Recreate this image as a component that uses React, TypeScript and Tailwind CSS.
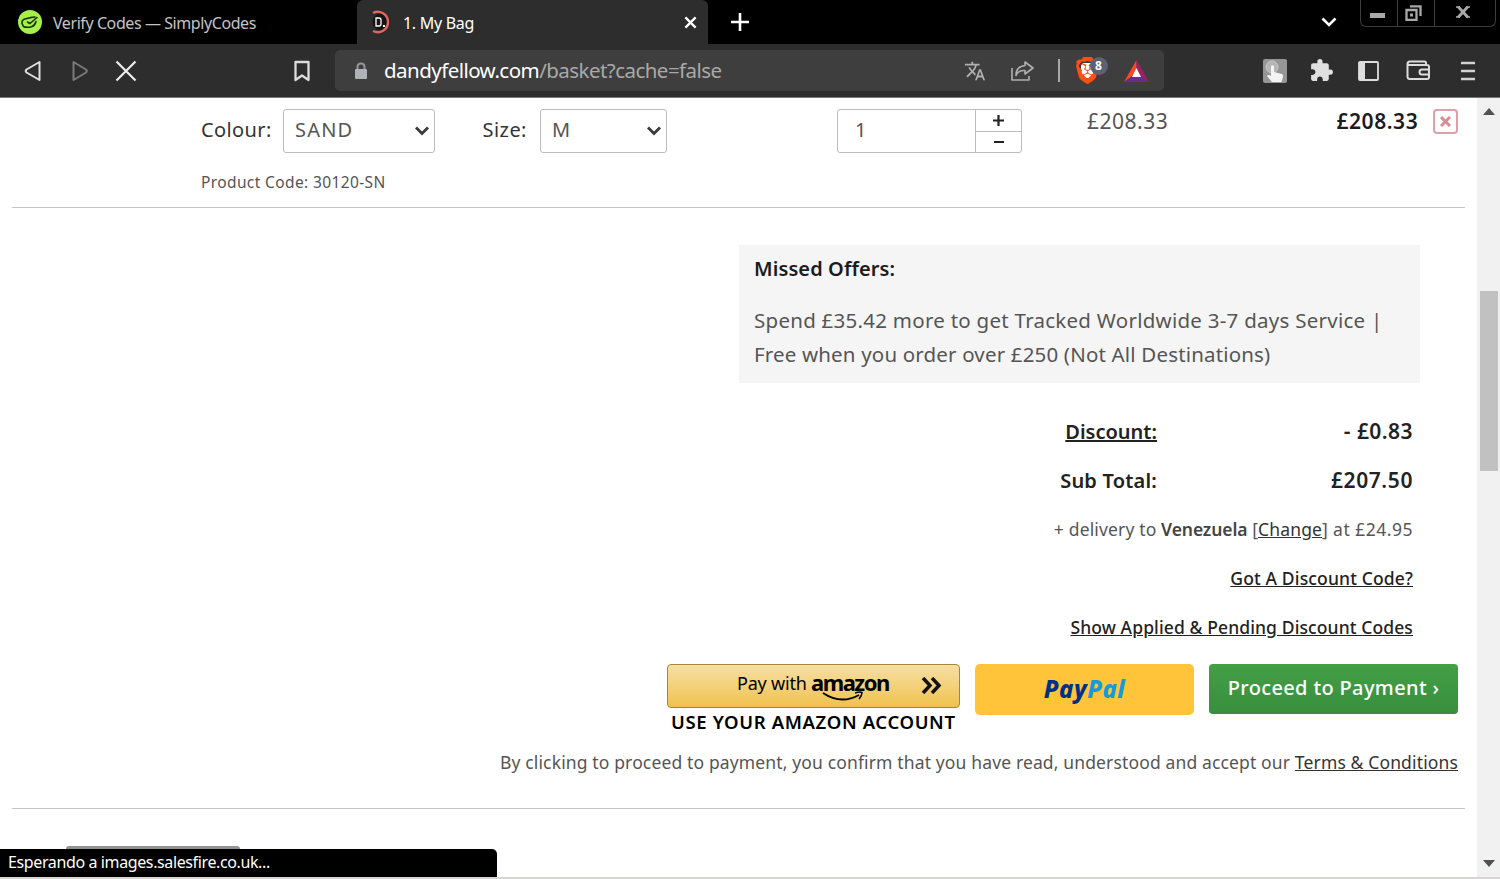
import type { ReactNode } from 'react';
import { MdExtension, MdTranslate } from 'react-icons/md';
import { SiBrave } from 'react-icons/si';

function TabBar() {
    return (
        <div className="flex h-11 items-start bg-black text-[16px] leading-[44px]">
            <div className="flex h-11 w-[357px] items-center pl-[18px] text-[#c4c4c4]">
                <svg width="24" height="24" viewBox="0 0 24 24" className="mr-[11px]">
                    <circle cx="12" cy="12" r="12" fill="#a6f04c" />
                    <g fill="none" stroke="#16310a" strokeWidth="1.6" strokeLinecap="round" strokeLinejoin="round">
                        <path d="M13 7.500 7 9Q3.500 10 4 13.500l1.500 3q3 1.500 8 .2 3.500-1.200 4.500-5.200" />
                        <path d="m9.500 12 2.500 1.500L19 7.500" />
                        <path d="M13 7.500 17 7" />
                    </g>
                </svg>
                <span className="mt-px tracking-[-0.42px]">Verify Codes — SimplyCodes</span>
            </div>
            <div className="flex h-11 w-[351px] items-center rounded-t-md bg-[#2d2d2d] pl-[14px] pr-[11px] text-white">
                <svg width="24" height="24" viewBox="0 0 24 24" className="mr-2">
                    <circle cx="10" cy="12" r="8.500" fill="#141414" />
                    <path d="M2.500 3a10.200 10.200 0 1 1 0 18" fill="none" stroke="#e0665e" strokeWidth="2.500" transform="translate(-.5 0)" />
                    <path d="M5 8h3q2 0 2 2v4q0 2-2 2H5z" fill="none" stroke="#fff" strokeWidth="1.300" />
                    <rect x="12" y="15" width="2" height="2" fill="#fff" />
                </svg>
                <span className="mt-px tracking-[-0.3px]">1. My Bag</span>
                <svg width="13" height="13" viewBox="0 0 14 14" className="ml-auto" stroke="#fff" strokeWidth="2.500">
                    <path d="m1.500 1.500 11 11m0-11-11 11" />
                </svg>
            </div>
            <svg width="18" height="18" viewBox="0 0 18 18" className="ml-[23px] mt-[13px]" stroke="#fff" strokeWidth="2.600">
                <path d="M9 0v18M0 9h18" />
            </svg>
            <svg width="16" height="10" viewBox="0 0 16 10" className="ml-auto mt-[17px]" fill="none" stroke="#fff" strokeWidth="2.500">
                <path d="m1.500 1.500 6.500 6.500 6.500-6.500" />
            </svg>
            <div className="ml-[23px] mr-[4px] flex h-[27px] w-[136px] rounded-b-md border border-t-0 border-[#3c3c3c] text-[#a8a8a8]">
                <div className="flex w-[37px] border-r border-[#3c3c3c] pt-[13px] pl-[9px]">
                    <div className="h-[5px] w-[15px] bg-[#a8a8a8]" />
                </div>
                <div className="flex w-[37px] border-r border-[#3c3c3c] pt-[5px] pl-[7px]">
                    <svg width="17" height="16" viewBox="0 0 17 16" fill="none" stroke="#a8a8a8" strokeWidth="2.300">
                        <path d="M1.500 5h10v10h-10zM5 1.300h10.500V11" />
                        <path d="M5 8.500h3v3H5z" fill="#a8a8a8" stroke="none" />
                    </svg>
                </div>
                <div className="flex flex-1 pt-[6px] pl-[21px]">
                    <svg width="14" height="12" viewBox="0 0 14 12" fill="none" stroke="#a8a8a8" strokeWidth="2.900">
                        <path d="m2 .5 10 11m0-11-10 11" />
                        <path d="M0 1h4M10 1h4M0 11h4M10 11h4" strokeWidth="1.500" />
                    </svg>
                </div>
            </div>
        </div>
    );
}

function Toolbar() {
    return (
        <div className="flex h-[54px] items-center border-b border-[#777] bg-[#2d2d2d]">
            <svg width="18" height="22" viewBox="0 0 18 22" className="ml-[24px]" fill="none" stroke="#e0e0e0" strokeWidth="2" strokeLinejoin="round">
                <path d="M15.500 2v18L2.500 12.500q-1.500-1.500 0-3z" />
            </svg>
            <svg width="18" height="22" viewBox="0 0 18 22" className="ml-[30px]" fill="none" stroke="#7a7a7a" strokeWidth="2" strokeLinejoin="round">
                <path d="M1.500 2v18L14 12.500q1.500-1.500 0-3z" />
            </svg>
            <svg width="22" height="22" viewBox="0 0 22 22" className="ml-[25px]" fill="none" stroke="#ececec" strokeWidth="2.200">
                <path d="m1.500 1.500 19 19m0-19-19 19" />
            </svg>
            <svg width="16" height="22" viewBox="0 0 16 22" className="ml-[157px]" fill="none" stroke="#dcdcdc" strokeWidth="2.300" strokeLinejoin="round">
                <path d="M1.500 2h13v18L8 15.500 1.500 20z" />
            </svg>
            <div className="ml-[25px] flex h-[41px] w-[829px] items-center rounded-[5px] bg-[#3e3e3e] pl-[19px]">
                <svg width="14" height="18" viewBox="0 0 14 18" fill="none">
                    <path d="M3.500 8V5q0-3.500 3.500-3.500T10.500 5v3" stroke="#96969c" strokeWidth="2" />
                    <rect x="1" y="7" width="12" height="10" rx="1" fill="#b1b1b8" />
                </svg>
                <div className="ml-[16px] w-[360px] text-[20.500px] leading-[41px] tracking-[-0.54px] text-[#a9a9a9]">
                    <span className="text-white">dandyfellow.com</span>/basket?cache=false
                </div>
                <MdTranslate className="ml-[220px] h-[22px] w-[22px] text-[#b0b0b0]" />
                <svg width="24" height="22" viewBox="0 0 24 22" className="ml-[25px]" fill="none" stroke="#b0b0b0" strokeWidth="1.600" strokeLinejoin="round">
                    <path d="M1 8v12h17v-4" />
                    <path d="m14 2 8 6-8 6v-3.500q-7-.5-9 5 0-9 9-10z" />
                </svg>
                <div className="ml-[23px] h-[23px] w-[1.500px] bg-[#a8a8a8]" />
                <div className="relative ml-[15px] h-[28px] w-[34px]">
                    <div className="flex h-[28px] w-[26px] items-center justify-center">
                        <div className="flex h-[15px] w-[14px] items-center justify-center rounded-[4px] bg-white">
                            <SiBrave className="h-[27px] w-[27px] shrink-0 text-[#fb5012]" />
                        </div>
                    </div>
                    <div className="absolute top-[0px] left-[15px] flex h-[18px] w-[18px] items-center justify-center rounded-full bg-[#5d6174] text-[12px] leading-none font-bold text-white">
                        8
                    </div>
                </div>
                <svg width="25" height="22" viewBox="0 0 25 22" className="ml-[15px]">
                    <path d="M12.500 0 0 22 12.500 13z" fill="#ff4724" />
                    <path d="M12.500 0 25 22 12.500 13z" fill="#9e1f63" />
                    <path d="M0 22h25l-12.500-9z" fill="#662d91" />
                    <path d="M12.500 8 17 17H8z" fill="#fff" />
                </svg>
            </div>
            <svg width="24" height="24" viewBox="0 0 24 24" className="ml-[99px]">
                <rect width="24" height="24" rx="2" fill="#969696" />
                <circle cx="9" cy="8" r="6" fill="#b5b5b5" stroke="#c9c9c9" />
                <path d="M8 7q1.500-1.500 3 0v6l8 2q1.500 1 1 3l-1.500 5H9l-5-6q1-2 4 0z" fill="#f4f4f4" />
            </svg>
            <MdExtension className="ml-[22px] h-[25px] w-[25px] text-[#e0e0e0]" />
            <svg width="22" height="20" viewBox="0 0 22 20" className="ml-[24px]">
                <rect x="1" y="1" width="19" height="18" rx="1" fill="none" stroke="#dedede" strokeWidth="1.800" />
                <path d="M1 1h6v18H1z" fill="#dedede" />
            </svg>
            <svg width="25" height="21" viewBox="0 0 25 21" className="ml-[26px]" fill="none" stroke="#dcdcdc" strokeWidth="2">
                <path d="M20 4.500V3q0-1.500-1.500-1.500H4Q1.500 1.500 1.500 4v12.500q0 2.500 2.500 2.500h17q2 0 2-2V7q0-2-2-2H4Q1.500 5 1.500 3.500" />
                <path d="M23 9.500h-7q-2.500 0-2.500 2.500t2.500 2.500h7" />
            </svg>
            <svg width="16" height="20" viewBox="0 0 16 20" className="ml-[29px]" stroke="#d2d2d2" strokeWidth="2.400">
                <path d="M1 2h14M1 10h14M1 18h14" />
            </svg>
        </div>
    );
}

function Select({ value, className }: { value: string; className: string }) {
    return (
        <div className={`flex h-11 items-center justify-between rounded-[3px] border-[1.500px] border-[#bdbdbd] pr-[5px] pl-[11px] text-[#555] ${className}`}>
            <span className="-mt-[2px] tracking-[1.2px]">{value}</span>
            <svg width="14" height="10" viewBox="0 0 14 10" fill="none" stroke="#3a3a3a" strokeWidth="2.800">
                <path d="m1 1.500 6 6 6-6" />
            </svg>
        </div>
    );
}

function TotalRow({ children }: { children: ReactNode }) {
    return <div className="flex h-[49px] items-center justify-end whitespace-nowrap">{children}</div>;
}

function BasketItem() {
    return (
        <div className="ml-[12px] h-[110px] w-[1453px] border-b-[1.500px] border-[#c4c4c4] pt-[11px] text-[20px]">
            <div className="flex items-start pl-[189px] text-[#333]">
                <span className="w-[82px] leading-[41px] tracking-[0.4px]">Colour:</span>
                <Select value="SAND" className="w-[152px]" />
                <span className="ml-[47.5px] w-[57.5px] leading-[41px] tracking-[0.45px]">Size:</span>
                <Select value="M" className="w-[127px]" />
                <div className="ml-[170px] flex h-11 w-[185px] rounded-[3px] border-[1.500px] border-[#bdbdbd]">
                    <span className="w-[138px] border-r border-[#bdbdbd] pl-[17px] leading-[39px] text-[#555]">1</span>
                    <div className="flex flex-1 flex-col">
                        <div className="flex flex-1 items-center justify-center border-b border-[#bdbdbd]">
                            <svg width="11" height="11" viewBox="0 0 11 11" stroke="#222" strokeWidth="2.200">
                                <path d="M5.500 0v11M0 5.500h11" />
                            </svg>
                        </div>
                        <div className="flex flex-1 items-center justify-center">
                            <div className="h-[2.500px] w-[10px] bg-[#222]" />
                        </div>
                    </div>
                </div>
                <span className="ml-[65px] w-[249.5px] text-[21px] leading-[24px] tracking-[0.5px] text-[#555]">£208.33</span>
                <span className="text-[21px] leading-[24px] font-semibold tracking-[0.55px] text-[#1c1c1c]">£208.33</span>
                <div className="ml-auto mr-[7px] flex h-[25px] w-[25px] items-center justify-center rounded-[4px] border-[2.500px] border-[#e0a0a8]">
                    <svg width="11" height="11" viewBox="0 0 11 11" stroke="#d88c96" strokeWidth="3">
                        <path d="m1 1 9 9m0-9-9 9" />
                    </svg>
                </div>
            </div>
            <div className="mt-[18px] pl-[189px] text-[15.500px] leading-[22px] tracking-[0.38px] text-[#555]">Product Code: 30120-SN</div>
        </div>
    );
}

function PaymentButtons() {
    return (
        <div className="mt-[12px] flex items-start justify-end gap-[15px] pr-[19px]">
            <div className="w-[293px]">
                <div className="flex h-11 items-center rounded-[4px] border-[1.500px] border-[#a98530] bg-gradient-to-b from-[#f7dfa2] to-[#f0c14a] pl-[69px] text-black">
                    <span className="-mt-[5px] w-[74px] text-[18px] tracking-[-0.2px]">Pay with</span>
                    <div className="relative -mt-[9px] w-[80px] text-[22px] leading-[30px] font-bold tracking-[-1.5px]">
                        amazon
                        <svg width="44" height="11" viewBox="0 0 44 11" className="absolute top-[24px] left-[11px]" fill="none" stroke="#000" strokeWidth="2">
                            <path d="M1 2q18 12 36 2" />
                            <path d="M33 2q5-1.500 7-.5 0 3-3 6.500" strokeWidth="1.500" />
                        </svg>
                    </div>
                    <svg width="21" height="17" viewBox="0 0 21 17" className="-mt-[2px] ml-[30px]" fill="none" stroke="#111" strokeWidth="3.500">
                        <path d="m2 1 7 7.500L2 16M11 1l7 7.500L11 16" />
                    </svg>
                </div>
                <div className="pl-[4px] text-[18.500px] leading-[28px] font-semibold tracking-[0.63px] whitespace-nowrap text-black">USE YOUR AMAZON ACCOUNT</div>
            </div>
            <div className="flex h-[51px] w-[219px] items-center justify-center rounded-[5px] bg-[#ffc439] pb-[2px] text-[24px] font-extrabold tracking-[0.5px] text-[#003087] italic">
                Pay<span className="text-[#169bd7]">Pal</span>
            </div>
            <div className="flex h-[50px] w-[249px] items-center justify-center rounded-[4px] bg-gradient-to-b from-[#43a047] to-[#388e3c] pb-[2px] text-[20px] font-medium tracking-[0.36px] whitespace-nowrap text-white">
                Proceed to Payment ›
            </div>
        </div>
    );
}

function Basket() {
    return (
        <div className="flex h-[779px] w-[1477px] flex-col overflow-hidden bg-white">
            <BasketItem />
            <div className="mt-[37px] mr-[57px] h-[138px] w-[681px] self-end bg-[#f5f5f5] pt-[8px] pl-[15px] text-[20px] whitespace-nowrap">
                <div className="leading-[31px] font-semibold tracking-[0.1px] text-[#1c1c1c]">Missed Offers:</div>
                <div className="mt-[19px] text-[20.500px] leading-[34px] text-[#555]">
                    <div className="tracking-[0.26px]">Spend £35.42 more to get Tracked Worldwide 3-7 days Service |</div>
                    <div className="tracking-[0.17px]">Free when you order over £250 (Not All Destinations)</div>
                </div>
            </div>
            <div className="mt-[24px] pr-[64px] text-[17.500px] text-[#222]">
                <TotalRow>
                    <span className="text-[20px] font-semibold underline">Discount:</span>
                    <span className="w-[256px] text-right text-[21px] font-semibold tracking-[0.45px]">- £0.83</span>
                </TotalRow>
                <TotalRow>
                    <span className="text-[20px] font-semibold tracking-[0.2px]">Sub Total:</span>
                    <span className="w-[256px] text-right text-[21px] font-semibold tracking-[0.6px]">£207.50</span>
                </TotalRow>
                <TotalRow>
                    <span className="tracking-[0.15px] text-[#555]">
                        + delivery to <b className="font-semibold tracking-[-0.1px] text-[#444]">Venezuela</b> [<span className="text-[#333] underline">Change</span>]
                        <span className="tracking-[0.5px]"> at £24.95</span>
                    </span>
                </TotalRow>
                <TotalRow>
                    <span className="font-medium tracking-[0.15px] underline">Got A Discount Code?</span>
                </TotalRow>
                <TotalRow>
                    <span className="font-medium tracking-[0.11px] underline">Show Applied &amp; Pending Discount Codes</span>
                </TotalRow>
            </div>
            <PaymentButtons />
            <div className="mt-[12px] h-[61px] w-[1453px] self-center border-b-[1.500px] border-[#c4c4c4] pr-[7px] text-right text-[17.500px] leading-[28px] tracking-[0.14px] text-[#555]">
                By clicking to proceed to payment, you confirm that you have read, understood and accept our <span className="text-[#333] underline">Terms &amp; Conditions</span>
            </div>
            <div className="mt-auto ml-[66px] h-[3px] w-[174px] rounded-t-[3px] bg-[#929292]" />
            <div className="h-[28px] w-[497px] rounded-tr-[5px] bg-black pl-[8px] text-[16px] leading-[26px] tracking-[-0.38px] text-white">Esperando a images.salesfire.co.uk...</div>
        </div>
    );
}

function Scrollbar() {
    return (
        <div className="flex w-[23px] flex-col items-center bg-[#f1f1f1] pt-[10px] pb-[10px]">
            <svg width="12" height="7" viewBox="0 0 12 7">
                <path d="M6 0 12 7H0z" fill="#505050" />
            </svg>
            <div className="mt-[176px] h-[180px] w-[18px] bg-[#c1c1c1]" />
            <svg width="12" height="7" viewBox="0 0 12 7" className="mt-auto">
                <path d="M6 7 12 0H0z" fill="#505050" />
            </svg>
        </div>
    );
}

export default function App() {
    return (
        <div className="h-[879px] w-[1500px] overflow-hidden bg-[#d6d5ce] font-['Noto_Sans',sans-serif]">
            <TabBar />
            <Toolbar />
            <div className="flex h-[779px]">
                <Basket />
                <Scrollbar />
            </div>
        </div>
    );
}
